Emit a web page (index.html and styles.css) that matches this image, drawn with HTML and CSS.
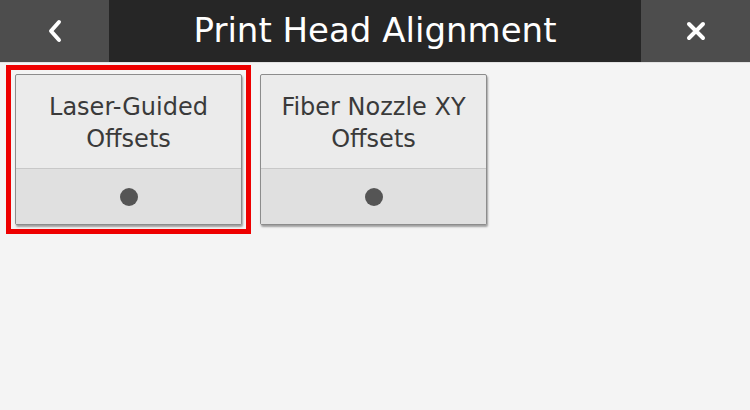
FILE: index.html
```html
<!DOCTYPE html>
<html lang="en">
<head>
    <meta charset="UTF-8">
    <title>Print Head Alignment</title>
    <link rel="stylesheet" href="styles.css">
</head>
<body>
    <div class="header">
        <div class="header-btn">
            <svg width="16" height="24" viewBox="0 0 16 24">
                <path d="M12 3 L4 12 L12 21" fill="none" stroke="#fff" stroke-width="4" stroke-linecap="round" stroke-linejoin="round"/>
            </svg>
        </div>
        <div class="header-title">Print Head Alignment</div>
        <div class="header-btn">
            <svg width="20" height="20" viewBox="0 0 20 20">
                <path d="M3 3 L17 17 M17 3 L3 17" fill="none" stroke="#fff" stroke-width="4" stroke-linecap="round"/>
            </svg>
        </div>
    </div>

    <div class="menu">
        <div class="slot selected">
            <div class="card">
                <div class="card-label">Laser-Guided<br>Offsets</div>
                <div class="card-foot"><span class="dot"></span></div>
            </div>
        </div>
        <div class="slot">
            <div class="card">
                <div class="card-label">Fiber Nozzle XY<br>Offsets</div>
                <div class="card-foot"><span class="dot"></span></div>
            </div>
        </div>
    </div>
</body>
</html>
```

FILE: styles.css
```css
body {
    margin: 0;
    background-color: #f4f4f4;
    font-family: 'DejaVu Sans', Verdana, sans-serif;
    width: 750px;
    height: 410px;
    overflow: hidden;
}
.header {
    display: flex;
    height: 62px;
    background: #262626;
    border-bottom: 1px solid #e2e2e2;
}
.header-btn {
    width: 109px;
    background: #4d4d4d;
    display: flex;
    align-items: center;
    justify-content: center;
}
.header-title {
    flex: 1;
    color: #fff;
    font-size: 34px;
    text-align: center;
    line-height: 60px;
}
.menu {
    display: flex;
    padding: 2px 0 0 6px;
}
.slot {
    padding: 4px;
    border: 5px solid transparent;
}
.slot.selected {
    border-color: #ee0000;
}
.card {
    width: 225px;
    background: #ebebeb;
    border: 1px solid #8c8c8c;
    border-radius: 2px;
    box-shadow: 1px 2px 2px rgba(0,0,0,0.35);
}
.card-label {
    height: 90px;
    padding-top: 3px;
    border-bottom: 1px solid #c8c8c8;
    display: flex;
    align-items: center;
    justify-content: center;
    text-align: center;
    color: #3a3a3a;
    font-size: 24px;
    line-height: 32px;
}
.card-foot {
    height: 55px;
    background: #e0e0e0;
    display: flex;
    align-items: center;
    justify-content: center;
}
.dot {
    width: 18px;
    height: 18px;
    border-radius: 50%;
    background: #555;
}
```
